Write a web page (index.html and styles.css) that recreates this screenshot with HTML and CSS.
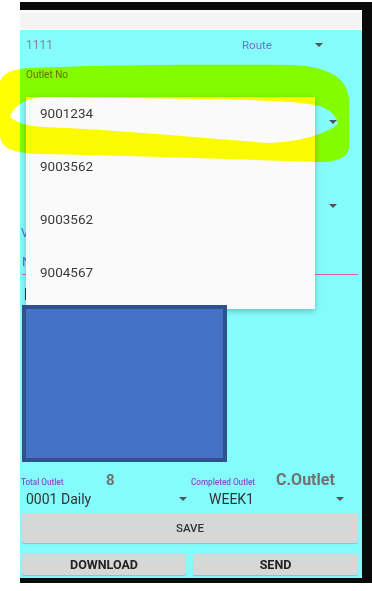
FILE: index.html
```html
<!DOCTYPE html>
<html>
<head>
<meta charset="utf-8">
<link rel="stylesheet" href="styles.css">
</head>
<body>
<div class="frame">
  <div class="topbar"></div>
  <div class="statusbar"></div>
  <div class="screen">
    <div class="top">
      <div class="row1">
        <span class="code">1111</span>
        <div class="route"><span>Route</span><svg class="arrow" width="8" height="4" viewBox="0 0 8 4"><polygon points="0,0 8,0 4,4"/></svg></div>
      </div>
      <div class="lbl-outlet">Outlet No</div>
      <div class="spin spin1"><svg class="arrow" width="8" height="4" viewBox="0 0 8 4"><polygon points="0,0 8,0 4,4"/></svg></div>
      <div class="spin spin2"><svg class="arrow" width="8" height="4" viewBox="0 0 8 4"><polygon points="0,0 8,0 4,4"/></svg></div>
      <div class="lbl-v">V</div>
      <div class="edit">N</div>
      <div class="cursor"></div>
    </div>
    <div class="bottom">
      <div class="stats">
        <span class="tiny">Total Outlet</span>
        <span class="num">8</span>
        <span class="tiny">Completed Outlet</span>
        <span class="num">C.Outlet</span>
      </div>
      <div class="spinners">
        <div class="sp sp-a"><span>0001 Daily</span><svg class="arrow" width="8" height="4" viewBox="0 0 8 4"><polygon points="0,0 8,0 4,4"/></svg></div>
        <div class="sp sp-b"><span>WEEK1</span><svg class="arrow" width="8" height="4" viewBox="0 0 8 4"><polygon points="0,0 8,0 4,4"/></svg></div>
      </div>
      <button class="btn save">SAVE</button>
      <div class="btnrow">
        <button class="btn bold dl">DOWNLOAD</button>
        <button class="btn bold send">SEND</button>
      </div>
    </div>
    <div class="popup">
      <div class="list">
        <div class="item">9001234</div>
        <div class="item">9003562</div>
        <div class="item">9003562</div>
        <div class="item">9004567</div>
      </div>
    </div>
    <div class="shape"></div>
  </div>
  <div class="bottombar"></div>
</div>
<svg class="highlight" width="372" height="591" viewBox="0 0 372 591">
  <path fill-rule="evenodd" d="M 0 84 C 0 74, 12 69, 30 68 C 90 65, 200 64, 290 65 C 325 66, 348 76, 349 100 L 349 146 C 349 156, 340 162, 318 162 C 250 160, 150 156, 40 154 C 12 153, 0 148, 0 134 Z M 10 116 C 16 104, 26 98, 45 97 L 200 99 C 260 100, 300 101, 320 106 C 331 110, 337 117, 338 124 C 326 134, 300 142, 268 143 C 200 138, 120 130, 45 127 C 25 126, 14 122, 10 116 Z"/>
</svg>
</body>
</html>
```

FILE: styles.css
```css
* { box-sizing: border-box; }
html, body { margin: 0; background: #fff; }
body {
  width: 372px;
  height: 591px;
  padding-top: 2px;
  position: relative;
  overflow: hidden;
  font-family: Roboto, "Liberation Sans", sans-serif;
}
.frame {
  margin-left: 20px;
  width: 352px;
  background: #0a0a0a;
  padding-right: 10px;
}
.topbar {
  height: 8px;
  background: #0a0a0a;
}
.bottombar {
  height: 5px;
  background: #0a0a0a;
}
.statusbar {
  height: 20px;
  background: #f3f4f4;
  border-top: 3px solid #fbfbfb;
  border-bottom: 2px solid #f9f9f9;
}
.screen {
  position: relative;
  height: 548px;
  background: #84fcfb;
  display: flex;
  flex-direction: column;
  padding-bottom: 3px;
}
.arrow { display: block; fill: #4e5557; }

/* top part */
.row1 {
  height: 30px;
  display: grid;
  grid-template-columns: 216px 81px;
  align-items: center;
  padding-left: 6px;
}
.code { font-size: 12px; color: #8a809c; }
.route {
  display: flex;
  justify-content: space-between;
  align-items: center;
  font-size: 11.5px;
  color: #7a6ec4;
}
.lbl-outlet {
  margin-top: 8px;
  height: 14px;
  line-height: 14px;
  padding-left: 6px;
  font-size: 10px;
  color: #6c6c80;
}
.spin {
  height: 40px;
  display: flex;
  justify-content: flex-end;
  align-items: center;
  padding-right: 25px;
}
.spin1 { margin-top: 20px; }
.spin2 { margin-top: 44px; }
.lbl-v {
  height: 14px;
  line-height: 14px;
  padding-left: 1px;
  font-size: 12px;
  color: #6a60c8;
}
.edit {
  margin: 0 4px 0 2px;
  height: 35px;
  padding-top: 15px;
  line-height: 14px;
  font-size: 13px;
  color: #6a60c8;
  border-bottom: 1px solid #d9679f;
}
.cursor {
  margin: 13px 0 0 5px;
  width: 1.5px;
  height: 12px;
  background: #333;
}

/* bottom part */
.bottom { margin-top: auto; }
.stats {
  height: 18px;
  display: grid;
  grid-template-columns: 85px 85px 85px 1fr;
  align-items: baseline;
  padding-left: 1px;
}
.tiny { font-size: 8.2px; font-weight: 500; color: #8a4fd8; line-height: 18px; }
.num { font-size: 16px; font-weight: 700; color: #707070; line-height: 18px; }
.stats .num:nth-child(2) { font-size: 15px; }
.spinners {
  margin-top: 1px;
  height: 18px;
  display: flex;
  align-items: center;
  font-size: 14px;
  line-height: 18px;
  color: #333;
}
.sp { display: flex; justify-content: space-between; align-items: center; }
.sp-a { margin-left: 6px; width: 161px; }
.sp-b { margin-left: 22px; width: 135px; }
.btn {
  display: block;
  border: none;
  border-radius: 2px;
  background: #d6d7d7;
  color: #333;
  font-family: Roboto, "Liberation Sans", sans-serif;
  padding: 0;
  box-shadow: 0 1px 1px rgba(0, 0, 0, 0.18);
}
.save {
  margin: 5px 4px 0 2px;
  width: 336px;
  height: 30px;
  font-size: 11.5px;
  font-weight: 500;
}
.btnrow {
  margin-top: 11px;
  display: flex;
  gap: 7px;
  padding-left: 2px;
}
.bold { height: 21px; font-size: 12.5px; font-weight: 700; color: #222; }
.dl { width: 164px; }
.send { width: 165px; }

/* dropdown popup over content */
.popup {
  position: absolute;
  left: 6px;
  top: 67px;
  width: 289px;
  height: 212px;
  background: #fafafa;
  overflow: hidden;
  box-shadow: 0 2px 6px rgba(0, 0, 0, 0.25);
  z-index: 2;
}
.list { margin-top: -10px; }
.item {
  height: 53px;
  line-height: 53px;
  padding-left: 14px;
  font-size: 13.5px;
  color: #3a3a3a;
}

/* annotation rectangle */
.shape {
  position: absolute;
  left: 2px;
  top: 275px;
  width: 205px;
  height: 157px;
  background: #4472c4;
  border: 4px solid #2f528f;
  z-index: 3;
}

/* highlighter annotation */
.highlight {
  position: absolute;
  left: 0;
  top: 0;
  fill: #ffff00;
  mix-blend-mode: multiply;
  pointer-events: none;
  z-index: 5;
}
```
